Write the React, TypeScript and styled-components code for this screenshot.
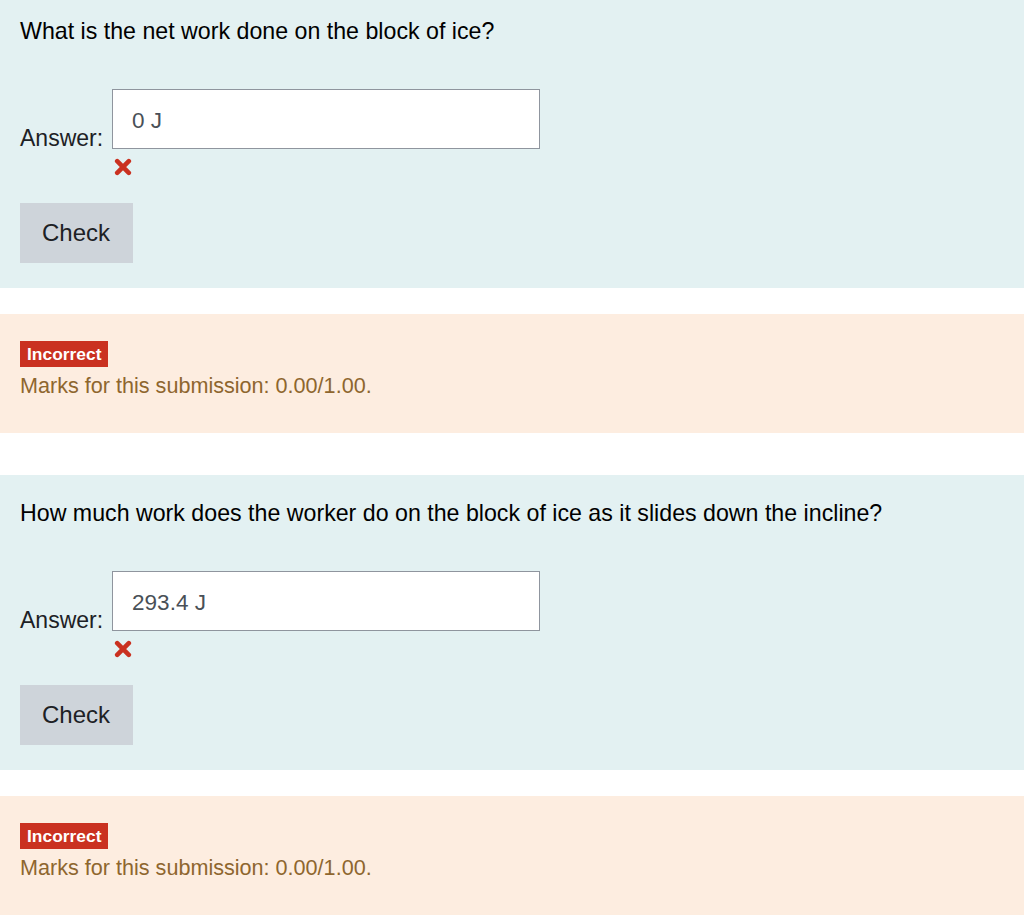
import React from "react";
import styled, { createGlobalStyle } from "styled-components";

const Global = createGlobalStyle`
  html, body { margin: 0; padding: 0; background: #ffffff; }
  body { font-family: "Liberation Sans", Arial, Helvetica, sans-serif; }
`;

const Page = styled.div`
  display: flex;
  flex-direction: column;
  margin-top: -7px;
`;

const Formulation = styled.div`
  background: #e3f1f2;
  padding: 23px 20px 25px 20px;
  display: flex;
  flex-direction: column;
  align-items: flex-start;
`;

const Question = styled.div`
  font-size: 23.2px;
  line-height: 30px;
  color: #000000;
  margin-bottom: 43px;
`;

const AnswerGrid = styled.div`
  display: grid;
  grid-template-columns: auto auto;
  column-gap: 9px;
`;

const Label = styled.label`
  font-size: 23px;
  line-height: 24px;
  color: #1d2125;
  align-self: end;
  margin-bottom: -1px;
`;

const Input = styled.input`
  box-sizing: border-box;
  width: 428px;
  height: 60px;
  border: 1px solid #8f959e;
  background: #ffffff;
  padding: 4px 19px 0 19px;
  font-family: "Liberation Sans", Arial, Helvetica, sans-serif;
  font-size: 22.5px;
  color: #495057;
  outline: none;
  border-radius: 0;
  margin: 0;
`;

const Cross = styled.svg`
  grid-column: 2;
  display: block;
  width: 18px;
  height: 18px;
  margin: 9px 0 0 2px;
`;

const CheckButton = styled.button`
  margin-top: 27px;
  width: 113px;
  height: 60px;
  border: none;
  background: #ced4da;
  color: #1d2125;
  font-family: "Liberation Sans", Arial, Helvetica, sans-serif;
  font-size: 24px;
  padding: 0 0 0 22px;
  text-align: left;
  cursor: pointer;
`;

const Outcome = styled.div`
  background: #fdede0;
  padding: 27px 20px 32px 20px;
  display: flex;
  flex-direction: column;
  align-items: flex-start;
`;

const Badge = styled.span`
  background: #ca3120;
  color: #ffffff;
  font-weight: bold;
  font-size: 17.4px;
  line-height: 26px;
  height: 26px;
  padding: 0 7px;
`;

const Marks = styled.div`
  font-size: 21.6px;
  line-height: 30px;
  color: #8e662e;
  margin-top: 4px;
`;

const Gap = styled.div<{ $h: number }>`
  height: ${(p) => p.$h}px;
`;

type Q = { text: string; answer: string };

const questions: Q[] = [
  { text: "What is the net work done on the block of ice?", answer: "0 J" },
  {
    text: "How much work does the worker do on the block of ice as it slides down the incline?",
    answer: "293.4 J",
  },
];

function CrossIcon() {
  return (
    <Cross viewBox="0 0 18 18">
      <path
        d="M3.2 3.2 L14.8 14.8 M14.8 3.2 L3.2 14.8"
        stroke="#ca3120"
        strokeWidth="4.6"
        strokeLinecap="round"
        fill="none"
      />
    </Cross>
  );
}

function QuestionBlock({ q }: { q: Q }) {
  return (
    <>
      <Formulation>
        <Question>{q.text}</Question>
        <AnswerGrid>
          <Label>Answer:</Label>
          <Input defaultValue={q.answer} readOnly />
          <CrossIcon />
        </AnswerGrid>
        <CheckButton>Check</CheckButton>
      </Formulation>
      <Gap $h={26} />
      <Outcome>
        <Badge>Incorrect</Badge>
        <Marks>Marks for this submission: 0.00/1.00.</Marks>
      </Outcome>
    </>
  );
}

export default function App() {
  return (
    <>
      <Global />
      <Page>
        <QuestionBlock q={questions[0]} />
        <Gap $h={42} />
        <QuestionBlock q={questions[1]} />
      </Page>
    </>
  );
}
